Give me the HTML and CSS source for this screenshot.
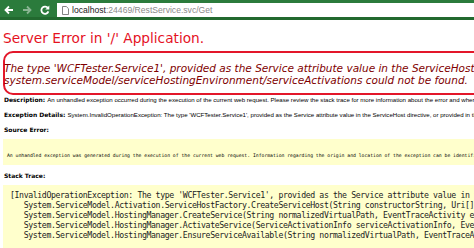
FILE: index.html
```html
<!DOCTYPE html>
<html lang="en">
<head>
    <meta charset="UTF-8">
    <meta name="viewport" content="width=device-width, initial-scale=1.0">
    <title>Server Error in '/' Application.</title>
    <link rel="stylesheet" href="styles.css">
</head>
<body>
    <div class="toolbar">
        <span class="nav">
            <svg width="10" height="10" viewBox="0 0 10 10"><path d="M9 5H2M5 1.5L1.5 5L5 8.5" fill="none" stroke="#fff" stroke-width="1.8"/></svg>
        </span>
        <span class="nav dim">
            <svg width="10" height="10" viewBox="0 0 10 10"><path d="M1 5H8M5 1.5L8.5 5L5 8.5" fill="none" stroke="#fff" stroke-width="1.8"/></svg>
        </span>
        <span class="nav">
            <svg width="10" height="10" viewBox="0 0 10 10"><path d="M8 3.2A3.6 3.6 0 1 0 8.4 6.4" fill="none" stroke="#fff" stroke-width="1.8"/><path d="M9.3 0.6V4.6H5.3Z" fill="#fff"/></svg>
        </span>
        <div class="omnibox">
            <svg width="7" height="9" viewBox="0 0 7 9"><path d="M0.5 0.5H4.3L6.5 2.7V8.5H0.5Z" fill="#fff" stroke="#777" stroke-width="0.9"/></svg>
            <span class="host">localhost</span><span class="path">:24469/RestService.svc/Get</span>
        </div>
    </div>

    <div class="page">
        <h1>Server Error in '/' Application.</h1>

        <div class="alert">
            <h2>The type 'WCFTester.Service1', provided as the Service attribute value in the ServiceHost directive, or provided in the configuration element<br>system.serviceModel/serviceHostingEnvironment/serviceActivations could not be found.</h2>
        </div>

        <p class="info first"><b>Description: </b><span>An unhandled exception occurred during the execution of the current web request. Please review the stack trace for more information about the error and where it originated in the code.</span></p>

        <p class="info"><b>Exception Details: </b><span>System.InvalidOperationException: The type 'WCFTester.Service1', provided as the Service attribute value in the ServiceHost directive, or provided in the configuration element system.serviceModel/serviceHostingEnvironment/serviceActivations could not be found.</span></p>

        <p class="info"><b>Source Error:</b></p>

        <div class="source">
            <code>An unhandled exception was generated during the execution of the current web request. Information regarding the origin and location of the exception can be identified using the exception stack trace below.</code>
        </div>

        <p class="info"><b>Stack Trace:</b></p>

        <pre class="trace">
[InvalidOperationException: The type 'WCFTester.Service1', provided as the Service attribute value in the ServiceHost directive, or provided in the configuration element system.serviceModel/serviceHostingEnvironment/serviceActivations could not be found.]
   System.ServiceModel.Activation.ServiceHostFactory.CreateServiceHost(String constructorString, Uri[] baseAddresses) +51530
   System.ServiceModel.HostingManager.CreateService(String normalizedVirtualPath, EventTraceActivity eventTraceActivity) +1440
   System.ServiceModel.HostingManager.ActivateService(ServiceActivationInfo serviceActivationInfo, EventTraceActivity eventTraceActivity) +44
   System.ServiceModel.HostingManager.EnsureServiceAvailable(String normalizedVirtualPath, EventTraceActivity eventTraceActivity) +615
</pre>
    </div>
</body>
</html>
```

FILE: styles.css
```css
body {
    margin: 0;
    padding: 0;
    width: 474px;
    height: 248px;
    overflow: hidden;
    background: #fff;
    font-family: "DejaVu Sans", Verdana, sans-serif;
    color: #000;
}

/* browser chrome */
.toolbar {
    display: flex;
    align-items: center;
    height: 14px;
    padding: 3px 0 0 0;
    background-color: #2b7b3c;
    border-bottom: 3px solid #22692f;
}
.nav {
    display: flex;
    align-items: center;
    justify-content: center;
    width: 10px;
    height: 10px;
    margin-left: 4px;
    margin-right: 3px;
}
.nav + .nav {
    margin-left: 5px;
}
.nav.dim {
    opacity: 0.45;
}
.omnibox {
    flex: 1;
    display: flex;
    align-items: center;
    height: 14px;
    margin-left: 4px;
    padding-left: 5px;
    background-color: #fff;
    font-family: "Liberation Sans", Arial, sans-serif;
    font-size: 8.6px;
    white-space: nowrap;
}
.omnibox svg {
    margin-right: 3px;
}
.host {
    color: #222;
}
.path {
    color: #8a8a8a;
}

/* error page */
.page {
    padding-left: 3px;
}
h1 {
    margin: 10px 0 5px 0;
    font-size: 13.7px;
    line-height: 16px;
    font-weight: normal;
    color: #e5121f;
    white-space: nowrap;
}
.alert {
    width: 520px;
    height: 24px;
    padding: 9px 0 7px 0;
    border: 2.5px solid #e3172a;
    border-radius: 10px;
}
.alert h2 {
    margin: 0 0 0 -1px;
    font-size: 10.5px;
    line-height: 12px;
    font-weight: normal;
    font-style: italic;
    color: #800000;
    white-space: nowrap;
}
.info {
    margin: 7px 0 0 1px;
    font-size: 6px;
    line-height: 8px;
    white-space: nowrap;
}
.info.first {
    margin-top: 1px;
}
.info b {
    font-weight: bold;
}
.info span {
    font-family: "Liberation Sans", Arial, sans-serif;
    font-size: 6.1px;
}
.source {
    margin: 5px 0 0 0;
    padding: 3px 0 4px 4px;
    background-color: #ffffcc;
    white-space: nowrap;
}
.source code {
    font-family: "DejaVu Sans Mono", monospace;
    font-size: 4.75px;
    line-height: 6px;
}
.trace {
    margin: 5px 0 0 0;
    padding: 5px 0 8px 7px;
    background-color: #ffffcc;
    font-family: "DejaVu Sans Mono", monospace;
    font-size: 8.2px;
    letter-spacing: -0.38px;
    line-height: 10px;
    color: #222;
}
```
